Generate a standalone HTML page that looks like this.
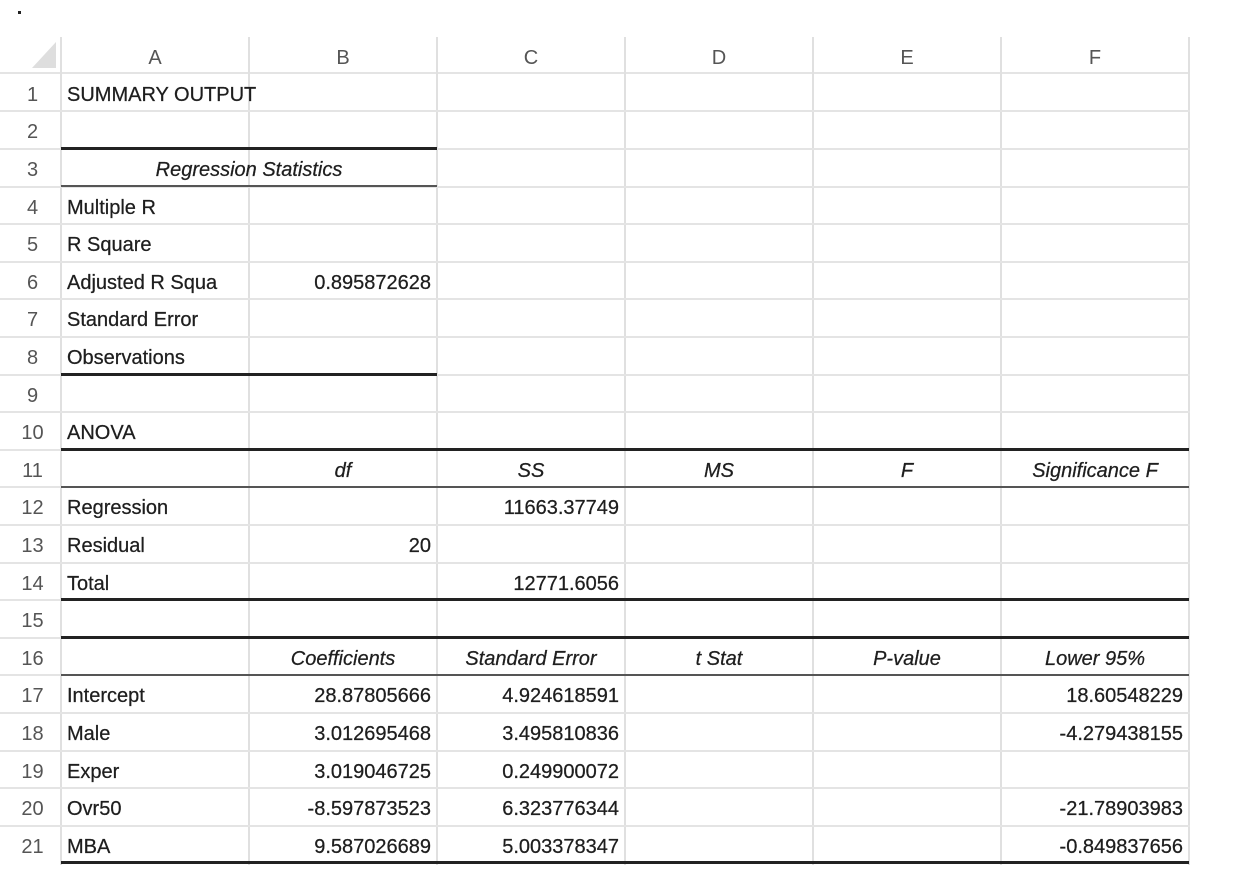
<!DOCTYPE html><html><head><style>
body{margin:0;width:1256px;height:882px;background:#fff;position:relative;overflow:hidden;font-family:"Liberation Sans",sans-serif;color:#1e1e1e}
.gridv{position:absolute;top:37px;height:828px;width:2px;background:#e0e0e0}
.gridh{position:absolute;left:0;width:1190px;height:2px;background:#e4e4e4}
.row{position:absolute;left:0;height:37.6px;display:flex;font-size:20px;line-height:37.6px;padding-top:3px;white-space:nowrap;-webkit-text-stroke:0.25px #1e1e1e}
.row div{box-sizing:border-box;overflow:visible}
.n{width:61px;text-align:center;color:#555;padding-left:4px;-webkit-text-stroke:0}
.c{width:188px;padding:0 6px}
.r{text-align:right}.m{text-align:center}.i{font-style:italic}
.hdr{position:absolute;top:39px;left:0;height:36px;display:flex;font-size:20px;line-height:38px;color:#555}
.hdr div{width:188px;text-align:center}
.t{position:absolute;height:3px;background:#222}
.tt{position:absolute;height:2px;background:#555}
</style></head><body>
<div style="position:absolute;left:18px;top:11px;width:3px;height:3px;background:#222"></div>
<svg style="position:absolute;left:30px;top:40px" width="28" height="30"><polygon points="26,2 26,28 2,28" fill="#dedede"/></svg>
<div class="hdr"><div style="width:61px"></div><div>A</div><div>B</div><div>C</div><div>D</div><div>E</div><div>F</div></div>
<div class="gridh" style="top:72px"></div>
<div class="gridv" style="left:60px"></div><div class="gridv" style="left:248px"></div><div class="gridv" style="left:436px"></div><div class="gridv" style="left:624px"></div><div class="gridv" style="left:812px"></div><div class="gridv" style="left:1000px"></div><div class="gridv" style="left:1188px"></div>
<div class="gridh" style="top:110px"></div><div class="gridh" style="top:148px"></div><div class="gridh" style="top:186px"></div><div class="gridh" style="top:223px"></div><div class="gridh" style="top:261px"></div><div class="gridh" style="top:298px"></div><div class="gridh" style="top:336px"></div><div class="gridh" style="top:374px"></div><div class="gridh" style="top:411px"></div><div class="gridh" style="top:449px"></div><div class="gridh" style="top:486px"></div><div class="gridh" style="top:524px"></div><div class="gridh" style="top:562px"></div><div class="gridh" style="top:599px"></div><div class="gridh" style="top:637px"></div><div class="gridh" style="top:674px"></div><div class="gridh" style="top:712px"></div><div class="gridh" style="top:750px"></div><div class="gridh" style="top:787px"></div><div class="gridh" style="top:825px"></div>

<div class="row" style="top:74px"><div class="n">1</div><div class="c">SUMMARY OUTPUT</div></div>
<div class="row" style="top:111px"><div class="n">2</div></div>
<div class="row" style="top:149px"><div class="n">3</div><div class="c m i" style="width:376px">Regression Statistics</div></div>
<div class="row" style="top:187px"><div class="n">4</div><div class="c">Multiple R</div></div>
<div class="row" style="top:224px"><div class="n">5</div><div class="c">R Square</div></div>
<div class="row" style="top:262px"><div class="n">6</div><div class="c">Adjusted R Squa</div><div class="c r">0.895872628</div></div>
<div class="row" style="top:299px"><div class="n">7</div><div class="c">Standard Error</div></div>
<div class="row" style="top:337px"><div class="n">8</div><div class="c">Observations</div></div>
<div class="row" style="top:375px"><div class="n">9</div></div>
<div class="row" style="top:412px"><div class="n">10</div><div class="c">ANOVA</div></div>
<div class="row" style="top:450px"><div class="n">11</div><div class="c"></div><div class="c m i">df</div><div class="c m i">SS</div><div class="c m i">MS</div><div class="c m i">F</div><div class="c m i">Significance F</div></div>
<div class="row" style="top:487px"><div class="n">12</div><div class="c">Regression</div><div class="c"></div><div class="c r">11663.37749</div></div>
<div class="row" style="top:525px"><div class="n">13</div><div class="c">Residual</div><div class="c r">20</div></div>
<div class="row" style="top:563px"><div class="n">14</div><div class="c">Total</div><div class="c"></div><div class="c r">12771.6056</div></div>
<div class="row" style="top:600px"><div class="n">15</div></div>
<div class="row" style="top:638px"><div class="n">16</div><div class="c"></div><div class="c m i">Coefficients</div><div class="c m i">Standard Error</div><div class="c m i">t Stat</div><div class="c m i">P-value</div><div class="c m i">Lower 95%</div></div>
<div class="row" style="top:675px"><div class="n">17</div><div class="c">Intercept</div><div class="c r">28.87805666</div><div class="c r">4.924618591</div><div class="c"></div><div class="c"></div><div class="c r">18.60548229</div></div>
<div class="row" style="top:713px"><div class="n">18</div><div class="c">Male</div><div class="c r">3.012695468</div><div class="c r">3.495810836</div><div class="c"></div><div class="c"></div><div class="c r">-4.279438155</div></div>
<div class="row" style="top:751px"><div class="n">19</div><div class="c">Exper</div><div class="c r">3.019046725</div><div class="c r">0.249900072</div></div>
<div class="row" style="top:788px"><div class="n">20</div><div class="c">Ovr50</div><div class="c r">-8.597873523</div><div class="c r">6.323776344</div><div class="c"></div><div class="c"></div><div class="c r">-21.78903983</div></div>
<div class="row" style="top:826px"><div class="n">21</div><div class="c">MBA</div><div class="c r">9.587026689</div><div class="c r">5.003378347</div><div class="c"></div><div class="c"></div><div class="c r">-0.849837656</div></div>

<div class="t" style="left:61px;width:376px;top:147px"></div>
<div class="tt" style="left:61px;width:376px;top:185px"></div>
<div class="t" style="left:61px;width:376px;top:373px"></div>
<div class="t" style="left:61px;width:1128px;top:448px"></div>
<div class="tt" style="left:61px;width:1128px;top:486px"></div>
<div class="t" style="left:61px;width:1128px;top:598px"></div>
<div class="t" style="left:61px;width:1128px;top:636px"></div>
<div class="tt" style="left:61px;width:1128px;top:674px"></div>
<div class="t" style="left:61px;width:1128px;top:861px"></div>
</body></html>
